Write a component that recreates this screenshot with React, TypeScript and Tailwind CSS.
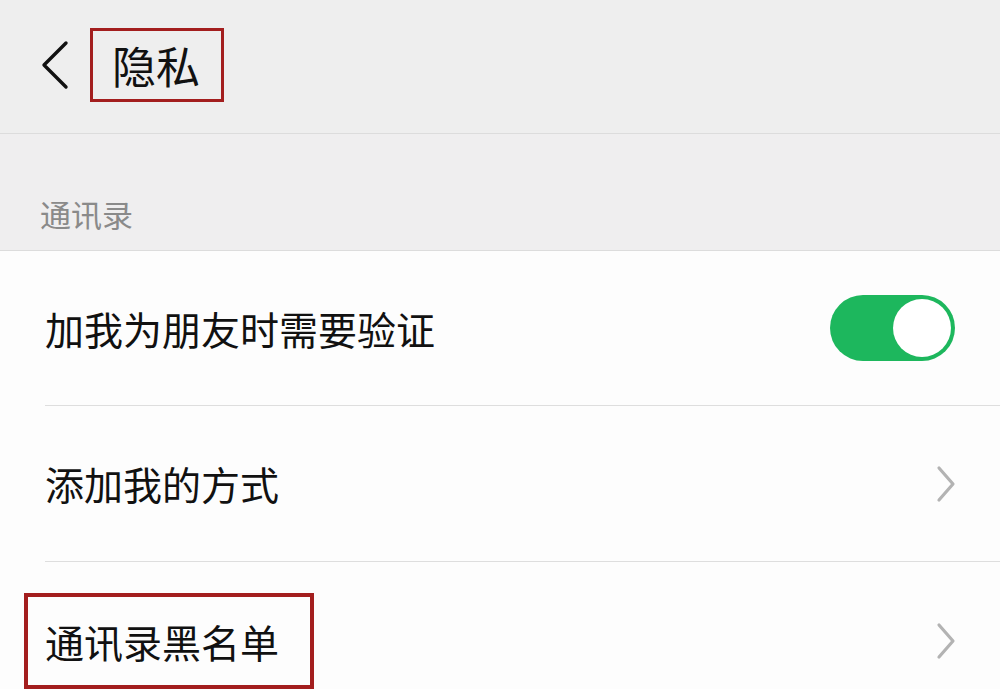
import React from "react";

const font = { fontFamily: '"Noto Sans CJK SC", "Noto Sans", sans-serif' };

function Chevron() {
  return (
    <svg width="22" height="38" viewBox="0 0 22 38" className="shrink-0">
      <path d="M4 3 L18 19 L4 35" fill="none" stroke="#b3b3b3" strokeWidth="3.2" strokeLinecap="round" strokeLinejoin="round" />
    </svg>
  );
}

export default function App() {
  return (
    <div className="w-[1000px] h-[689px] overflow-hidden bg-[#fdfdfd]" style={font}>
      {/* Header */}
      <div className="h-[134px] bg-[#eeeeee] border-b border-[#dcdcdc] flex items-center pl-[40px] pb-[4px]">
        <svg width="30" height="50" viewBox="0 0 30 50" className="shrink-0">
          <path d="M26 3 L4 25 L26 47" fill="none" stroke="#111" strokeWidth="3.4" strokeLinecap="round" strokeLinejoin="round" />
        </svg>
        <div className="ml-[20px] h-[74px] border-[3px] border-[#a31e1e] pl-[19px] pr-[21px] flex items-center">
          <span className="text-[44px] leading-none text-[#111]">隐私</span>
        </div>
      </div>
      {/* Section header */}
      <div className="h-[117px] bg-[#efeeef] border-b border-[#dcdcdc] pl-[40px] pt-[64px]">
        <span className="text-[31px] leading-[31px] text-[#8a8a8a]">通讯录</span>
      </div>
      {/* Rows */}
      <div className="bg-[#fdfdfd]">
        <div className="pl-[45px]">
          <div className="h-[155px] border-b border-[#dedede] flex items-center justify-between pr-[45px]">
            <span className="text-[39px] leading-none text-[#111]">加我为朋友时需要验证</span>
            <div className="w-[125px] h-[66px] rounded-full bg-[#1db75d] flex items-center justify-end pr-[4px]">
              <div className="w-[58px] h-[58px] rounded-full bg-white" />
            </div>
          </div>
          <div className="h-[156px] border-b border-[#dedede] flex items-center justify-between pr-[43px]">
            <span className="text-[39px] leading-none text-[#111]">添加我的方式</span>
            <Chevron />
          </div>
          <div className="h-[156px] flex items-center justify-between pr-[43px] pt-[2px]">
            <div className="-ml-[21px] h-[96px] border-[4px] border-[#a31e1e] pl-[17px] pr-[31px] flex items-center">
              <span className="text-[39px] leading-none text-[#111]">通讯录黑名单</span>
            </div>
            <Chevron />
          </div>
        </div>
      </div>
    </div>
  );
}
